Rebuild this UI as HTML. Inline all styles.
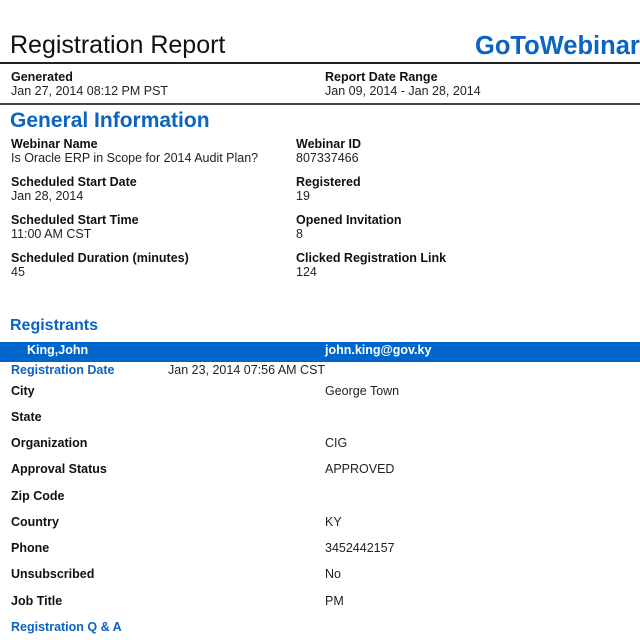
<!DOCTYPE html>
<html><head><meta charset="utf-8"><style>
body{margin:0;width:640px;height:640px;overflow:hidden;background:#fff;font-family:"Liberation Sans",Arial,sans-serif;color:#111;position:relative}
.a{position:absolute;white-space:nowrap}
.b{font-weight:bold;font-size:12.5px}
.v{font-size:12.5px;color:#222}
.blue{color:#0a64c0}
</style></head><body>
<div class="a" style="left:10px;top:31px;font-size:25px;">Registration Report</div>
<div class="a blue" style="left:475px;top:32px;font-size:25.5px;font-weight:bold;">GoToWebinar</div>
<div class="a" style="left:0;top:62px;width:640px;height:2px;background:#222"></div>
<div class="a b" style="left:11px;top:70px">Generated</div>
<div class="a v" style="left:11px;top:84px">Jan 27, 2014 08:12 PM PST</div>
<div class="a b" style="left:325px;top:70px">Report Date Range</div>
<div class="a v" style="left:325px;top:84px">Jan 09, 2014 - Jan 28, 2014</div>
<div class="a" style="left:0;top:103px;width:640px;height:2px;background:#444"></div>
<div class="a blue" style="left:10px;top:109px;font-size:21px;font-weight:bold">General Information</div>

<div class="a b" style="left:11px;top:137px">Webinar Name</div>
<div class="a v" style="left:11px;top:151px">Is Oracle ERP in Scope for 2014 Audit Plan?</div>
<div class="a b" style="left:296px;top:137px">Webinar ID</div>
<div class="a v" style="left:296px;top:151px">807337466</div>
<div class="a b" style="left:11px;top:175px">Scheduled Start Date</div>
<div class="a v" style="left:11px;top:189px">Jan 28, 2014</div>
<div class="a b" style="left:296px;top:175px">Registered</div>
<div class="a v" style="left:296px;top:189px">19</div>
<div class="a b" style="left:11px;top:213px">Scheduled Start Time</div>
<div class="a v" style="left:11px;top:227px">11:00 AM CST</div>
<div class="a b" style="left:296px;top:213px">Opened Invitation</div>
<div class="a v" style="left:296px;top:227px">8</div>
<div class="a b" style="left:11px;top:251px">Scheduled Duration (minutes)</div>
<div class="a v" style="left:11px;top:265px">45</div>
<div class="a b" style="left:296px;top:251px">Clicked Registration Link</div>
<div class="a v" style="left:296px;top:265px">124</div>

<div class="a blue" style="left:10px;top:317px;font-size:16px;font-weight:bold">Registrants</div>
<div class="a" style="left:0;top:342px;width:640px;height:20px;background:#0066cc"></div>
<div class="a b" style="left:27px;top:343px;color:#fff">King,John</div>
<div class="a b" style="left:325px;top:343px;color:#fff">john.king@gov.ky</div>
<div class="a b blue" style="left:11px;top:363px">Registration Date</div>
<div class="a v" style="left:168px;top:363px">Jan 23, 2014 07:56 AM CST</div>

<div class="a b" style="left:11px;top:384px">City</div><div class="a v" style="left:325px;top:384px">George Town</div>
<div class="a b" style="left:11px;top:410px">State</div>
<div class="a b" style="left:11px;top:436px">Organization</div><div class="a v" style="left:325px;top:436px">CIG</div>
<div class="a b" style="left:11px;top:462px">Approval Status</div><div class="a v" style="left:325px;top:462px">APPROVED</div>
<div class="a b" style="left:11px;top:489px">Zip Code</div>
<div class="a b" style="left:11px;top:515px">Country</div><div class="a v" style="left:325px;top:515px">KY</div>
<div class="a b" style="left:11px;top:541px">Phone</div><div class="a v" style="left:325px;top:541px">3452442157</div>
<div class="a b" style="left:11px;top:567px">Unsubscribed</div><div class="a v" style="left:325px;top:567px">No</div>
<div class="a b" style="left:11px;top:594px">Job Title</div><div class="a v" style="left:325px;top:594px">PM</div>
<div class="a b blue" style="left:11px;top:620px">Registration Q &amp; A</div>
</body></html>
